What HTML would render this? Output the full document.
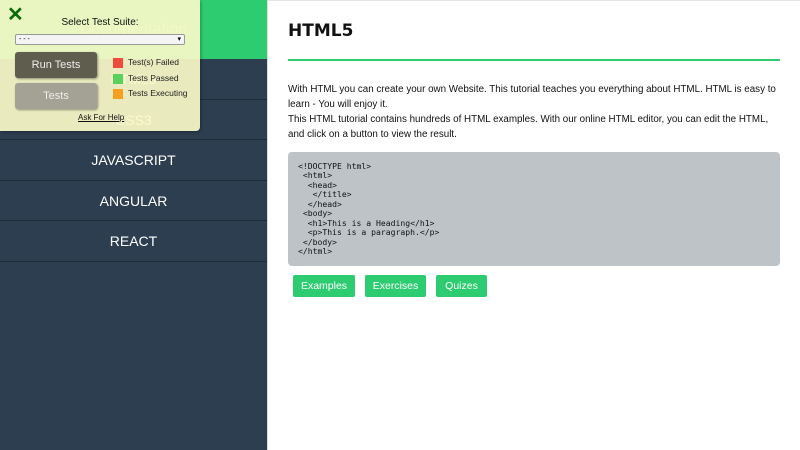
<!DOCTYPE html>
<html><head><meta charset="utf-8"><style>
*{box-sizing:border-box;margin:0;padding:0}
body{width:800px;height:450px;overflow:hidden;font-family:"Liberation Sans",sans-serif;background:#fff;position:relative}
.side{position:absolute;left:0;top:0;width:267px;height:450px;background:#2c3e50}
.top{height:59px;background:#2ecc71;color:rgba(255,255,255,.5);text-align:center;line-height:59px;font-size:16px}
.it{height:40.5px;border-bottom:1px solid #1f2d3a;color:#fff;text-align:center;line-height:40px;font-size:14px}
.main{position:absolute;left:267px;top:0;width:533px;height:450px;border-left:1px solid #ddd;border-top:1px solid #e5e5e5}
h1{position:absolute;left:20px;top:20px;font-size:17px;font-family:"DejaVu Sans",sans-serif;font-weight:bold;color:#111}
.hr{position:absolute;left:20px;top:58px;width:492px;height:2px;background:#2ecc71}
.p{position:absolute;left:20px;top:81px;width:500px;font-size:9.8px;line-height:15px;color:#111;white-space:nowrap}
pre{position:absolute;left:20px;top:151px;width:492px;height:114px;background:#bdc3c7;border-radius:4px;padding:10px 10px;font-family:"DejaVu Sans Mono",monospace;font-size:8.1px;line-height:9.45px;color:#111}
.b{position:absolute;top:274px;height:22px;background:#2ecc71;color:#fff;font-size:10.5px;line-height:23px;text-align:center;border-radius:2px}
.ov{position:absolute;left:0;top:0;width:200px;height:131px;background:rgba(250,250,200,.92);border-radius:0 0 4px 0;box-shadow:1px 1px 3px rgba(0,0,0,.3)}
.x{position:absolute;left:7px;top:2px;font-size:20px;font-weight:bold;color:#0a6b0a}
.lab{position:absolute;left:0;width:200px;top:17px;text-align:center;font-size:10px;color:#111}
.sel{position:absolute;left:15px;top:34px;width:170px;height:11px;background:#f4f4f4;border:1px solid #999;border-radius:2px;font-size:7px;line-height:9px;padding-left:3px}
.btn{position:absolute;left:15px;width:82px;height:26px;border-radius:3px;color:#eee;font-size:11px;text-align:center;line-height:26px;box-shadow:1px 1px 2px rgba(0,0,0,.4)}
.sq{position:absolute;left:113px;width:10px;height:10px}
.lg{position:absolute;left:128px;font-size:8.5px;color:#222}
.help{position:absolute;left:78px;top:113px;font-size:8px;text-decoration:underline;color:#111}
</style></head><body>
<div class="side">
<div class="top">Documentation</div>
<div class="it">HTML5</div>
<div class="it">CSS3</div>
<div class="it">JAVASCRIPT</div>
<div class="it">ANGULAR</div>
<div class="it">REACT</div>
</div>
<div class="main">
<h1>HTML5</h1>
<div class="hr"></div>
<div class="p">With HTML you can create your own Website. This tutorial teaches you everything about HTML. HTML is easy to<br>learn - You will enjoy it.<br>This HTML tutorial contains hundreds of HTML examples. With our online HTML editor, you can edit the HTML,<br>and click on a button to view the result.</div>
<pre>&lt;!DOCTYPE html&gt;
 &lt;html&gt;
  &lt;head&gt;
   &lt;/title&gt;
  &lt;/head&gt;
 &lt;body&gt;
  &lt;h1&gt;This is a Heading&lt;/h1&gt;
  &lt;p&gt;This is a paragraph.&lt;/p&gt;
 &lt;/body&gt;
&lt;/html&gt;</pre>
<div class="b" style="left:25px;width:62px">Examples</div>
<div class="b" style="left:97px;width:61px">Exercises</div>
<div class="b" style="left:168px;width:51px">Quizes</div>
</div>
<div class="ov">
<div class="x">✕</div>
<div class="lab">Select Test Suite:</div>
<div class="sel">- - -<span style="position:absolute;right:3px;top:0;font-size:7px">▾</span></div>
<div class="btn" style="top:52px;background:#5e5d4e">Run Tests</div>
<div class="btn" style="top:83px;background:#a3a294">Tests</div>
<div class="sq" style="top:58px;background:#f04a3a"></div><div class="lg" style="top:57px">Test(s) Failed</div>
<div class="sq" style="top:74px;background:#5ad15a"></div><div class="lg" style="top:73px">Tests Passed</div>
<div class="sq" style="top:89px;background:#f5a020"></div><div class="lg" style="top:88px">Tests Executing</div>
<div class="help">Ask For Help</div>
</div>
</body></html>
